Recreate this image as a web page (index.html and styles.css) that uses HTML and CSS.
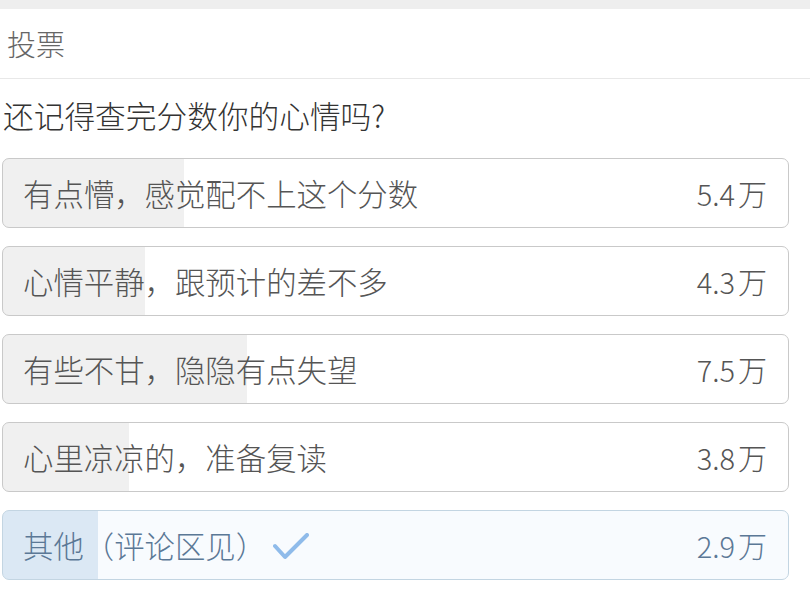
FILE: index.html
```html
<!DOCTYPE html>
<html lang="zh-CN">
<head>
    <meta charset="UTF-8">
    <meta name="viewport" content="width=device-width, initial-scale=1.0">
    <title>投票</title>
    <link rel="stylesheet" href="styles.css">
</head>
<body>
    <div class="topbar"></div>
    <div class="vote-title">投票</div>
    <div class="question">还记得查完分数你的心情吗?</div>
    <ul class="options">
        <li class="option" style="--fill: 181px;">
            <span class="label">有点懵，感觉配不上这个分数</span>
            <span class="count">5.4<span class="unit">万</span></span>
        </li>
        <li class="option" style="--fill: 142px;">
            <span class="label">心情平静，跟预计的差不多</span>
            <span class="count">4.3<span class="unit">万</span></span>
        </li>
        <li class="option" style="--fill: 244px;">
            <span class="label">有些不甘，隐隐有点失望</span>
            <span class="count">7.5<span class="unit">万</span></span>
        </li>
        <li class="option" style="--fill: 126px;">
            <span class="label">心里凉凉的，准备复读</span>
            <span class="count">3.8<span class="unit">万</span></span>
        </li>
        <li class="option selected" style="--fill: 95px;">
            <span class="label">其他（评论区见）<svg class="check" width="36" height="28" viewBox="0 0 36 28">
                    <path d="M2 13 L12 24 L34 2" fill="none" stroke="#8fbbea" stroke-width="4" stroke-linecap="round" stroke-linejoin="round"/>
                </svg></span>
            <span class="count">2.9<span class="unit">万</span></span>
        </li>
    </ul>
</body>
</html>
```

FILE: styles.css
```css
body {
    margin: 0;
    padding: 0;
    background: #fff;
    font-family: "Noto Sans CJK SC", "Noto Sans", sans-serif;
    color: #555;
}

.topbar {
    height: 9px;
    background: #eeeeee;
}

.vote-title {
    height: 69px;
    line-height: 69px;
    padding-left: 7px;
    font-size: 29px;
    font-weight: 300;
    color: #666;
    border-bottom: 1px solid #e8e8e8;
}

.question {
    padding: 16px 0 0 3px;
    height: 40px;
    line-height: 40px;
    font-size: 30.7px;
    font-weight: 300;
    color: #333;
}

.options {
    list-style: none;
    margin: 23px 21px 0 2px;
    padding: 0;
    display: flex;
    flex-direction: column;
    gap: 18px;
}

.option {
    height: 68px;
    display: flex;
    align-items: center;
    justify-content: space-between;
    padding: 0 21px 0 20px;
    border: 1px solid #c9c9c9;
    border-radius: 7px;
    font-size: 30.4px;
    font-weight: 300;
    color: #555;
    background: linear-gradient(to right, #f0f0f0 var(--fill), #fff var(--fill));
}

.label {
    display: flex;
    align-items: center;
}

.count {
    font-size: 29px;
}

.unit {
    margin-left: 3px;
}

.option.selected {
    border-color: #c3d5e2;
    color: #5b7896;
    background: linear-gradient(to right, #dbe8f4 var(--fill), #f8fbfe var(--fill));
}

.check {
    margin-left: 7px;
    margin-top: 4px;
}
```
